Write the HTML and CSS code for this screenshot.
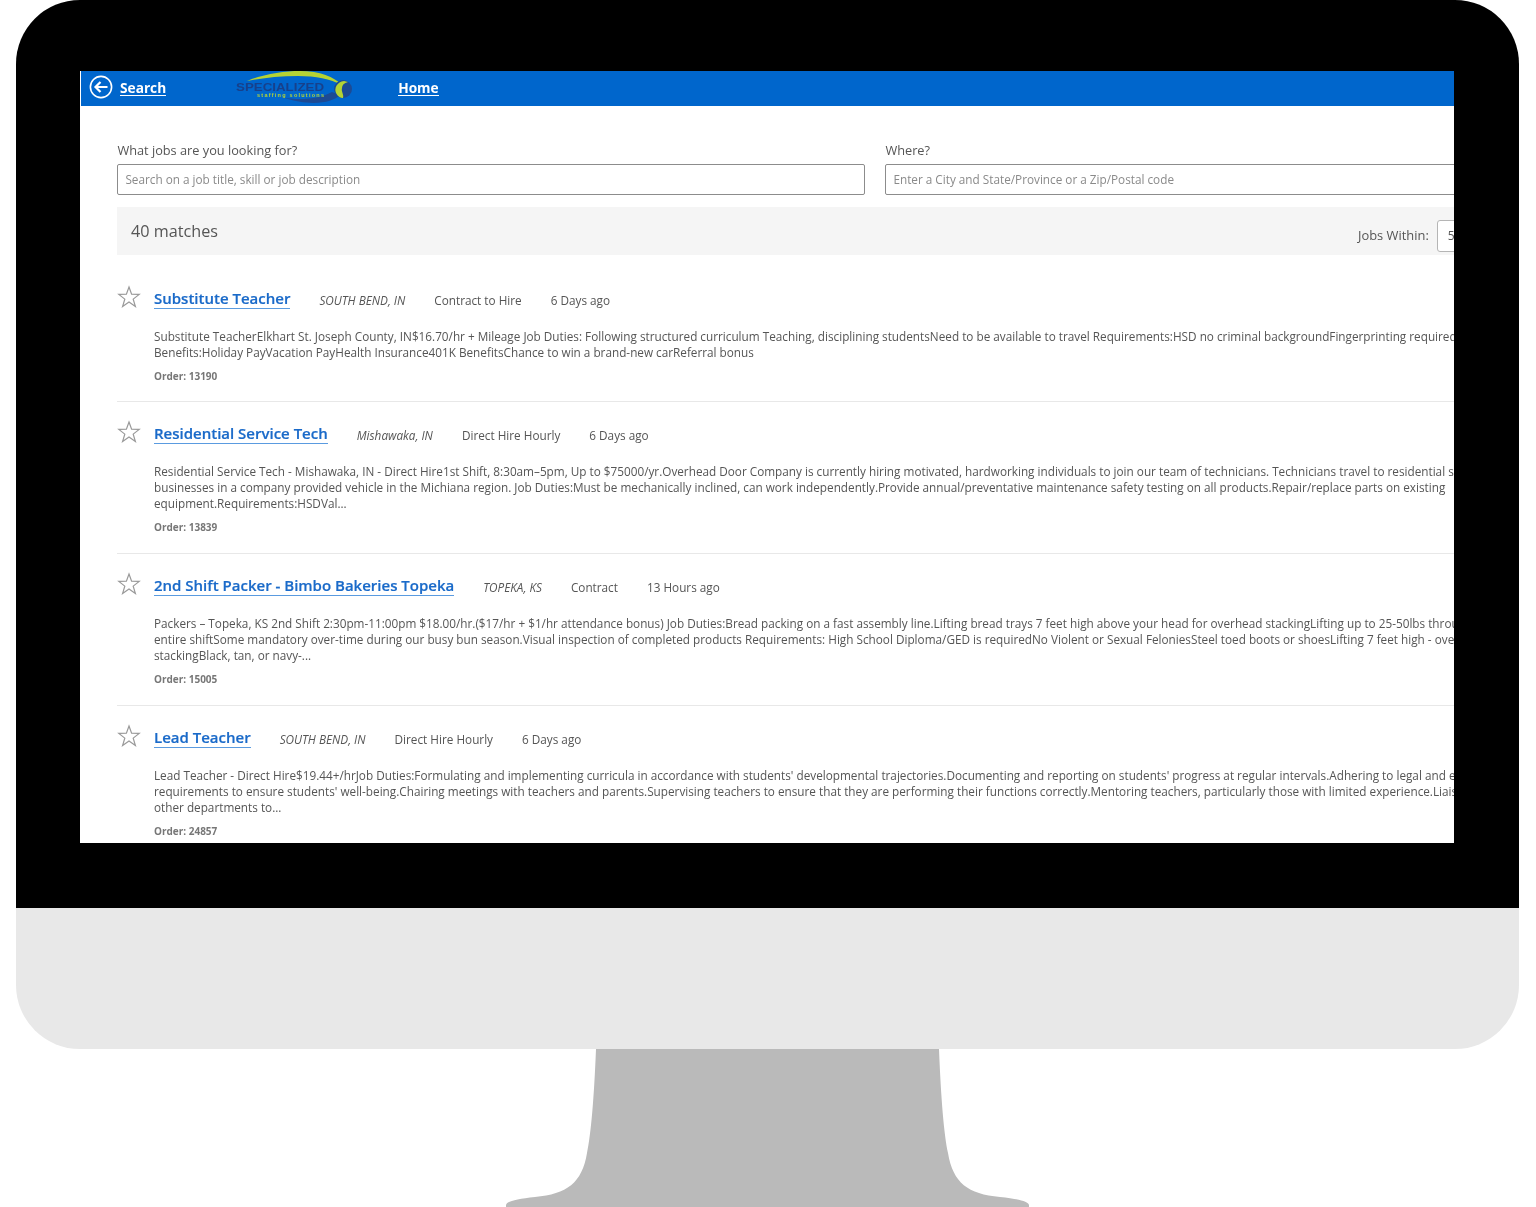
FILE: index.html
```html
<!DOCTYPE html>
<html>
<head>
    <title>Job Search</title>
    <link rel="stylesheet" href="styles.css">
</head>
<body>
    <div class="monitor">
        <div class="bezel">
            <div class="screen">
                <div class="topbar">
                    <svg class="back-icon" viewBox="0 0 24 24" width="24" height="24">
                        <circle cx="12" cy="12" r="10.6" fill="none" stroke="#fff" stroke-width="1.6"/>
                        <path d="M18.5 12H7M11.5 7l-5 5 5 5" fill="none" stroke="#fff" stroke-width="2.2"/>
                    </svg>
                    <a class="nav-link search-link">Search</a>
                    <svg class="logo" viewBox="0 0 118 35" width="118" height="35">
                        <path d="M11 10C28 3 48 0 64 0c20 0 34 6 42 14C94 8 80 5 62 5 44 5 26 7 11 10z" fill="#b5d334"/>
                        <path d="M46 26c16 4 38 2 50-5l8 3c-8 8-30 12-58 2z" fill="#1c4a94"/>
                        <circle cx="107" cy="18" r="9" fill="#1c4a94"/>
                        <path d="M108 10c-7 1-10 7-8 12 2 4 5 5 7 5 1-4-2-6-1-10 0-3 2-5 6-6z" fill="#b5d334"/>
                        <text x="0" y="19.5" class="logo-name" textLength="88" lengthAdjust="spacingAndGlyphs">SPECIALIZED</text>
                        <text x="21" y="25.5" class="logo-sub" textLength="67">staffing solutions</text>
                    </svg>
                    <a class="nav-link">Home</a>
                </div>
                <div class="content">
                    <div class="fields">
                        <label class="field">
                            <span class="field-label">What jobs are you looking for?</span>
                            <span class="field-input">Search on a job title, skill or job description</span>
                        </label>
                        <label class="field">
                            <span class="field-label">Where?</span>
                            <span class="field-input">Enter a City and State/Province or a Zip/Postal code</span>
                        </label>
                    </div>
                    <div class="matches">
                        <span class="match-count">40 matches</span>
                        <div class="within">
                            <span class="within-label">Jobs Within:</span>
                            <span class="within-select">5</span>
                        </div>
                    </div>

                    <div class="job first">
                        <div class="job-head">
                            <svg class="star" viewBox="0 0 24 24" width="24" height="24"><path d="M12 2l2.6 7.2 7.6.2-6 4.7 2.2 7.4L12 17l-6.4 4.5 2.2-7.4-6-4.7 7.6-.2z"/></svg>
                            <a class="job-title">Substitute Teacher</a>
                            <span class="job-place">SOUTH BEND, IN</span>
                            <span class="job-meta">Contract to Hire</span>
                            <span class="job-meta">6 Days ago</span>
                        </div>
                        <p class="job-desc">Substitute TeacherElkhart St. Joseph County, IN$16.70/hr + Mileage Job Duties: Following structured curriculum Teaching, disciplining studentsNeed to be available to travel Requirements:HSD no criminal backgroundFingerprinting required<br>Benefits:Holiday PayVacation PayHealth Insurance401K BenefitsChance to win a brand-new carReferral bonus</p>
                        <div class="job-order">Order: 13190</div>
                    </div>

                    <div class="job">
                        <div class="job-head">
                            <svg class="star" viewBox="0 0 24 24" width="24" height="24"><path d="M12 2l2.6 7.2 7.6.2-6 4.7 2.2 7.4L12 17l-6.4 4.5 2.2-7.4-6-4.7 7.6-.2z"/></svg>
                            <a class="job-title">Residential Service Tech</a>
                            <span class="job-place">Mishawaka, IN</span>
                            <span class="job-meta">Direct Hire Hourly</span>
                            <span class="job-meta">6 Days ago</span>
                        </div>
                        <p class="job-desc">Residential Service Tech - Mishawaka, IN - Direct Hire1st Shift, 8:30am–5pm, Up to $75000/yr.Overhead Door Company is currently hiring motivated, hardworking individuals to join our team of technicians. Technicians travel to residential sites<br>businesses in a company provided vehicle in the Michiana region. Job Duties:Must be mechanically inclined, can work independently.Provide annual/preventative maintenance safety testing on all products.Repair/replace parts on existing<br>equipment.Requirements:HSDVal...</p>
                        <div class="job-order">Order: 13839</div>
                    </div>

                    <div class="job">
                        <div class="job-head">
                            <svg class="star" viewBox="0 0 24 24" width="24" height="24"><path d="M12 2l2.6 7.2 7.6.2-6 4.7 2.2 7.4L12 17l-6.4 4.5 2.2-7.4-6-4.7 7.6-.2z"/></svg>
                            <a class="job-title">2nd Shift Packer - Bimbo Bakeries Topeka</a>
                            <span class="job-place">TOPEKA, KS</span>
                            <span class="job-meta">Contract</span>
                            <span class="job-meta">13 Hours ago</span>
                        </div>
                        <p class="job-desc">Packers – Topeka, KS 2nd Shift 2:30pm-11:00pm $18.00/hr.($17/hr + $1/hr attendance bonus) Job Duties:Bread packing on a fast assembly line.Lifting bread trays 7 feet high above your head for overhead stackingLifting up to 25-50lbs throughout<br>entire shiftSome mandatory over-time during our busy bun season.Visual inspection of completed products Requirements: High School Diploma/GED is requiredNo Violent or Sexual FeloniesSteel toed boots or shoesLifting 7 feet high - overhead<br>stackingBlack, tan, or navy-...</p>
                        <div class="job-order">Order: 15005</div>
                    </div>

                    <div class="job">
                        <div class="job-head">
                            <svg class="star" viewBox="0 0 24 24" width="24" height="24"><path d="M12 2l2.6 7.2 7.6.2-6 4.7 2.2 7.4L12 17l-6.4 4.5 2.2-7.4-6-4.7 7.6-.2z"/></svg>
                            <a class="job-title">Lead Teacher</a>
                            <span class="job-place">SOUTH BEND, IN</span>
                            <span class="job-meta">Direct Hire Hourly</span>
                            <span class="job-meta">6 Days ago</span>
                        </div>
                        <p class="job-desc">Lead Teacher - Direct Hire$19.44+/hrJob Duties:Formulating and implementing curricula in accordance with students' developmental trajectories.Documenting and reporting on students' progress at regular intervals.Adhering to legal and ethical<br>requirements to ensure students' well-being.Chairing meetings with teachers and parents.Supervising teachers to ensure that they are performing their functions correctly.Mentoring teachers, particularly those with limited experience.Liaising<br>other departments to...</p>
                        <div class="job-order">Order: 24857</div>
                    </div>
                </div>
            </div>
        </div>
        <div class="chin"></div>
        <svg class="stand" viewBox="0 0 523 158" width="523" height="158">
            <path d="M90 0H433C435 50 438 85 442 104 447 134 462 145 494 148 512 150 522 152 523 156V158H0V156C1 152 11 150 29 148 61 145 76 134 81 104 85 85 88 50 90 0z" fill="#bababa"/>
        </svg>
    </div>
</body>
</html>
```
FILE: styles.css
```css
* {
    margin: 0;
    padding: 0;
    box-sizing: border-box;
}

body {
    background: #fff;
    font-family: 'Open Sans', 'Noto Sans', sans-serif;
    color: #555;
    overflow: hidden;
    height: 1207px;
}

.monitor {
    width: 1503px;
    margin-left: 16px;
    display: flex;
    flex-direction: column;
}

.bezel {
    height: 908px;
    padding: 71px 65px 65px 64px;
    background: #000;
    border-radius: 64px 64px 0 0;
}

.screen {
    height: 772px;
    background: #fff;
    overflow: hidden;
    filter: blur(0.35px);
}

.topbar {
    height: 35px;
    margin-left: 1px;
    background: #0066cc;
    display: flex;
    align-items: center;
    padding-left: 8px;
}

.back-icon {
    flex: none;
    margin-top: -3px;
}

.nav-link {
    color: #fff;
    font-size: 13.7px;
    font-weight: 700;
    line-height: 15px;
    margin-top: -2px;
    border-bottom: 1px solid #fff;
}

.search-link {
    margin-left: 7px;
}

.logo {
    flex: none;
    margin-left: 70px;
    margin-right: 44px;
}

.logo-name {
    font: 700 11px 'Liberation Sans', sans-serif;
    fill: #17408b;
}

.logo-sub {
    font: 700 5.5px 'Liberation Sans', sans-serif;
    fill: #b5d334;
}

.content {
    width: 1517px;
    padding: 35px 0 0 37.4px;
}

.fields {
    display: flex;
    gap: 20px;
}

.field {
    flex: none;
    width: 748px;
    display: flex;
    flex-direction: column;
}

.field-label {
    font-size: 12.75px;
    line-height: 18px;
    margin-bottom: 5px;
}

.field-input {
    height: 31px;
    border: 1px solid #8c8c8c;
    border-radius: 2px;
    padding: 0 7px;
    font-size: 11.75px;
    line-height: 29px;
    color: #8a8a8a;
}

.matches {
    width: 1479px;
    height: 48px;
    margin-top: 12px;
    padding: 0 13px 0 13.6px;
    background: #f5f5f5;
    display: flex;
    align-items: center;
    justify-content: space-between;
}

.match-count {
    font-size: 16.2px;
    line-height: 48px;
    margin-top: -1px;
}

.within {
    display: flex;
    align-items: center;
    gap: 8px;
    font-size: 12.9px;
    margin-top: 10px;
}

.within-label {
    margin-top: -2px;
}

.within-select {
    width: 146.6px;
    height: 32px;
    background: #fff;
    border: 1px solid #b5b5b5;
    border-radius: 3px;
    padding-left: 10px;
    font-size: 12px;
    line-height: 30px;
}

.job {
    width: 1479px;
    padding: 17px 0 19px;
    border-bottom: 1px solid #e8e8e8;
}

.job.first {
    padding: 29px 0 18px;
}

.job-head {
    display: flex;
    align-items: center;
    height: 30px;
    white-space: nowrap;
}

.star {
    flex: none;
    margin-right: 12.6px;
    margin-top: -4px;
    fill: #fff;
    stroke: #999;
    stroke-width: 1.2;
}

.job-title {
    color: #1a6ac9;
    font-size: 15px;
    font-weight: 600;
    -webkit-text-stroke: 0.2px #1a6ac9;
    line-height: 19px;
    border-bottom: 1px solid #5a9be0;
    margin-right: 29px;
}

.job-place {
    font-size: 11.75px;
    font-style: italic;
    margin-top: 2px;
    margin-right: 29px;
}

.job-meta {
    font-size: 11.75px;
    margin-top: 2px;
    margin-right: 29px;
}

.job-desc {
    margin: 14px 0 0 36.6px;
    font-size: 11.75px;
    line-height: 16px;
    white-space: nowrap;
}

.job-order {
    margin: 9px 0 0 36.6px;
    font-size: 10px;
    font-weight: 700;
    line-height: 14px;
    color: #777;
}

.chin {
    height: 141px;
    background: #e8e8e8;
    border-radius: 0 0 64px 64px;
}

.stand {
    display: block;
    flex: none;
    margin-left: 490px;
}
```
